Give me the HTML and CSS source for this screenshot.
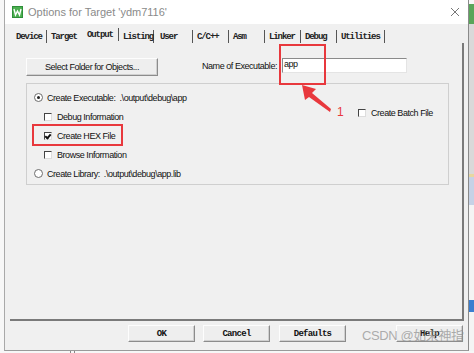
FILE: index.html
```html
<!DOCTYPE html>
<html lang="en">
<head>
  <meta charset="UTF-8" />
  <title>Options for Target 'ydm7116'</title>
  <link rel="stylesheet" href="styles.css">
</head>
<body>
  <div class="screen">
    <div class="window">
      <div class="titlebar">
        <svg class="app-icon" width="11" height="12" viewBox="0 0 11 12">
          <rect x="0" y="0" width="11" height="12" fill="#2f8f3a"/>
          <rect x="1" y="1" width="9" height="10" fill="#4caf50"/>
          <path d="M2 3 L3.5 9 L5.5 5 L7.5 9 L9 3" stroke="#fff" stroke-width="1.4" fill="none"/>
        </svg>
        <span class="title">Options for Target 'ydm7116'</span>
        <svg class="close" width="10" height="10" viewBox="0 0 10 10">
          <path d="M1 1 L9 9 M9 1 L1 9" stroke="#777" stroke-width="1"/>
        </svg>
      </div>

      <div class="dialog">
        <div class="tabs">
          <span class="tab sep">Device</span>
          <span class="tab">Target</span>
          <span class="tab active sep">Output</span>
          <span class="tab sep">Listing</span>
          <span class="tab tab-user sep">User</span>
          <span class="tab sep">C/C++</span>
          <span class="tab sep">Asm</span>
          <span class="tab sep">Linker</span>
          <span class="tab sep">Debug</span>
          <span class="tab tab-wide sep">Utilities</span>
        </div>

        <div class="panel">
          <div class="row-top">
            <div class="btn btn-folder">Select Folder for Objects...</div>
            <span class="exe-label">Name of Executable:</span>
            <div class="exe-input">app</div>
          </div>

          <div class="group">
            <div class="opt">
              <span class="radio on"></span>
              <span>Create Executable:&nbsp; .\output\debug\app</span>
            </div>
            <div class="opt sub split">
              <span class="item item-first"><span class="check"></span>Debug Information</span>
              <span class="item batch"><span class="check"></span>Create Batch File</span>
            </div>
            <div class="opt sub">
              <span class="check on"></span>
              <span>Create HEX File</span>
            </div>
            <div class="opt sub">
              <span class="check"></span>
              <span>Browse Information</span>
            </div>
            <div class="opt">
              <span class="radio"></span>
              <span>Create Library:&nbsp; .\output\debug\app.lib</span>
            </div>
          </div>

          <!-- red annotations drawn over the dialog -->
          <div class="mark mark-exe"></div>
          <div class="mark mark-hex"></div>
          <svg class="arrow" width="40" height="35" viewBox="0 0 40 35">
            <polygon points="2,2 16,6 12,10 31,26 30,29 9,14 5,17" fill="#e8383d"/>
          </svg>
          <span class="mark-num">1</span>
        </div>

        <div class="footer">
          <div class="btn btn-foot">OK</div>
          <div class="btn btn-foot">Cancel</div>
          <div class="btn btn-foot">Defaults</div>
          <div class="btn btn-foot btn-help">Help</div>
        </div>
      </div>

      <span class="watermark">CSDN @如来神指</span>
    </div>

    <div class="side">
      <div class="side-green"></div>
      <div class="side-gray"></div>
      <div class="side-yellow"></div>
      <div class="side-blue"></div>
      <div class="side-white"></div>
      <div class="side-accent"></div>
      <div class="side-rest"></div>
    </div>
  </div>
  <div class="below"><span class="bars"></span></div>
</body>
</html>
```

FILE: styles.css
```css
body {
  margin: 0;
  background: #f7f7f7;
  font-family: "Liberation Sans", sans-serif;
  font-size: 9px;
  letter-spacing: -0.45px;
  color: #111;
}
.screen {
  display: flex;
  width: 474px;
  height: 351px;
}
.window {
  position: relative;
  margin-left: 4px;
  width: 463px;
  height: 350px;
  border-left: 1px solid #a9a9a9;
  border-right: 1px solid #8a8a8a;
  border-bottom: 1px solid #9a9a9a;
  display: flex;
  flex-direction: column;
  background: #f0f0f0;
}
.titlebar {
  height: 24px;
  background: #fff;
  display: flex;
  align-items: center;
  padding-left: 7px;
}
.app-icon {
  margin-top: -1px;
}
.title {
  margin-left: 5px;
  font-size: 11px;
  letter-spacing: 0;
  color: #8a8a8a;
}
.close {
  margin-left: auto;
  margin-right: 8px;
}
.dialog {
  flex: 1;
  display: flex;
  flex-direction: column;
}
.tabs {
  display: flex;
  height: 15px;
  margin-top: 4px;
  padding-left: 7px;
  font-family: "Liberation Mono", monospace;
  font-weight: bold;
  font-size: 9px;
  letter-spacing: -1.1px;
  color: #222;
}
.tab {
  width: 35px;
  padding-left: 4px;
  box-sizing: border-box;
  display: flex;
  align-items: center;
  height: 13px;
  margin-top: 2px;
  white-space: nowrap;
}
.tab.sep {
  border-right: 1px solid #555;
}
.tab:nth-child(2),
.tab.active {
  width: 36px;
}
.tab.active {
  margin-top: 0;
}
.tab:nth-child(n+6) {
  width: 36px;
}
.tab.tab-user {
  width: 39px;
  padding-left: 6px;
}
.tab.tab-wide {
  width: 48px;
}
.panel {
  position: relative;
  margin-left: 5px;
  width: 454px;
  height: 278px;
  box-sizing: border-box;
  border-right: 2px solid #7a7a7a;
  border-bottom: 2px solid #7a7a7a;
  padding: 15px 0 0 16px;
}
.row-top {
  display: flex;
  align-items: flex-start;
  height: 18px;
}
.btn {
  box-sizing: border-box;
  display: flex;
  align-items: center;
  justify-content: center;
  background: #eeeeee;
  border-top: 1px solid #fdfdfd;
  border-left: 1px solid #fdfdfd;
  border-right: 1px solid #8c8c8c;
  border-bottom: 1px solid #8c8c8c;
  box-shadow: inset -1px -1px 0 #d0d0d0;
}
.btn-folder {
  width: 132px;
  height: 18px;
}
.exe-label {
  width: 124px;
  box-sizing: border-box;
  padding-right: 5px;
  text-align: right;
  height: 16px;
  line-height: 16px;
}
.exe-input {
  width: 125px;
  height: 15px;
  box-sizing: border-box;
  background: #fff;
  border-top: 1px solid #8a8a8a;
  border-left: 1px solid #8a8a8a;
  border-right: 1px solid #e4e4e4;
  border-bottom: 1px solid #e4e4e4;
  padding-left: 1px;
  line-height: 11px;
}
.group {
  margin-top: 7px;
  width: 423px;
  height: 102px;
  box-sizing: border-box;
  border: 1px solid #cfcfcf;
  padding: 4px 0 0 7px;
}
.opt {
  display: flex;
  align-items: center;
  height: 19px;
  white-space: nowrap;
}
.opt.sub {
  padding-left: 10px;
}
.item {
  display: flex;
  align-items: center;
}
.item-first {
  width: 314px;
}
.batch {
  align-self: flex-start;
  margin-top: 1px;
}
.radio {
  width: 7px;
  height: 7px;
  border-radius: 50%;
  border: 1px solid #6d6d6d;
  background: #fff;
  margin-right: 4px;
  position: relative;
}
.radio.on::after {
  content: "";
  position: absolute;
  left: 2px;
  top: 2px;
  width: 3px;
  height: 3px;
  border-radius: 50%;
  background: #222;
}
.check {
  width: 8px;
  height: 8px;
  box-sizing: border-box;
  border-top: 1px solid #444;
  border-left: 1px solid #444;
  border-right: 1px solid #ddd;
  border-bottom: 1px solid #ddd;
  background: #fff;
  margin-right: 5px;
  position: relative;
}
.check.on::after {
  content: "";
  position: absolute;
  left: 1px;
  top: 0px;
  width: 2px;
  height: 4px;
  border-right: 2px solid #111;
  border-bottom: 2px solid #111;
  transform: rotate(40deg);
}
.mark {
  position: absolute;
  border: 2px solid #e8383d;
  box-sizing: border-box;
}
.mark-exe {
  left: 269px;
  top: 1px;
  width: 47px;
  height: 41px;
}
.mark-hex {
  left: 22px;
  top: 81px;
  width: 91px;
  height: 22px;
}
.arrow {
  position: absolute;
  left: 290px;
  top: 40px;
}
.mark-num {
  position: absolute;
  left: 327px;
  top: 62px;
  font-size: 12px;
  letter-spacing: 0;
  color: #e8383d;
}
.footer {
  display: flex;
  gap: 9px;
  margin-top: 4px;
  padding-left: 123px;
  font-family: "Liberation Mono", monospace;
  font-weight: bold;
  font-size: 9px;
  letter-spacing: -0.7px;
}
.btn-foot {
  width: 67px;
  height: 17px;
}
.btn-foot:nth-child(2) {
  margin-left: -1px;
}
.btn-help {
  margin-left: 41px;
}
.watermark {
  position: absolute;
  left: 357px;
  top: 325px;
  font-family: "Liberation Sans", "Noto Sans CJK SC", sans-serif;
  font-size: 13px;
  letter-spacing: -0.4px;
  color: rgba(140, 140, 140, 0.7);
  white-space: nowrap;
}
.side {
  width: 5px;
  display: flex;
  flex-direction: column;
}
.side-green {
  height: 20px;
  margin-top: 4px;
  background: #5aa55a;
}
.side-gray {
  height: 150px;
  background: #d9d9d9;
}
.side-yellow {
  height: 3px;
  background: #e8d7a0;
}
.side-blue {
  height: 28px;
  background: #c6d2e6;
}
.side-white {
  height: 95px;
  background: #f4f4f4;
}
.side-accent {
  height: 12px;
  background: #3b7ed0;
}
.side-rest {
  flex: 1;
  background: #f4f4f4;
}
.below {
  height: 2px;
  padding-left: 70px;
}
.bars {
  display: block;
  width: 3px;
  height: 2px;
  border-left: 1px solid #888;
  border-right: 1px solid #888;
}
```
